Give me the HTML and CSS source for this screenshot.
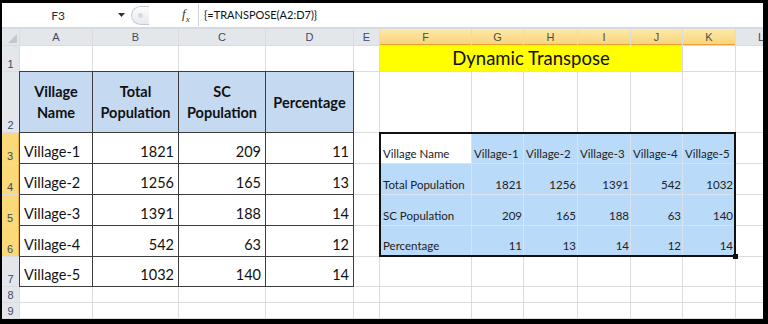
FILE: index.html
```html
<!DOCTYPE html>
<html>
<head>
	<meta charset="utf-8">
	<title>Dynamic Transpose</title>
	<link rel="stylesheet" href="styles.css">
</head>
<body>
<div class="window">
	<div class="formula-bar">
		<div class="name-box">F3</div>
		<div class="name-drop">
			<svg width="7" height="4" viewBox="0 0 7 4"><path d="M0 0H7L3.5 4Z" fill="#333"/></svg>
		</div>
		<div class="grip"><span></span></div>
		<div class="fx"><i>f</i><sub>x</sub></div>
		<div class="formula">{=TRANSPOSE(A2:D7)}</div>
	</div>

	<div class="sheet">
		<div class="title">Dynamic Transpose</div>

		<div class="data">
			<div class="hd">Village<br>Name</div>
			<div class="hd">Total<br>Population</div>
			<div class="hd">SC<br>Population</div>
			<div class="hd">Percentage</div>

			<div class="td">Village-1</div><div class="td num">1821</div><div class="td num">209</div><div class="td num">11</div>
			<div class="td">Village-2</div><div class="td num">1256</div><div class="td num">165</div><div class="td num">13</div>
			<div class="td">Village-3</div><div class="td num">1391</div><div class="td num">188</div><div class="td num">14</div>
			<div class="td">Village-4</div><div class="td num">542</div><div class="td num">63</div><div class="td num">12</div>
			<div class="td">Village-5</div><div class="td num">1032</div><div class="td num">140</div><div class="td num">14</div>
		</div>

		<div class="transpose">
			<div class="t active">Village Name</div>
			<div class="t">Village-1</div><div class="t">Village-2</div><div class="t">Village-3</div><div class="t">Village-4</div><div class="t">Village-5</div>
			<div class="t">Total Population</div>
			<div class="t num">1821</div><div class="t num">1256</div><div class="t num">1391</div><div class="t num">542</div><div class="t num">1032</div>
			<div class="t">SC Population</div>
			<div class="t num">209</div><div class="t num">165</div><div class="t num">188</div><div class="t num">63</div><div class="t num">140</div>
			<div class="t">Percentage</div>
			<div class="t num">11</div><div class="t num">13</div><div class="t num">14</div><div class="t num">12</div><div class="t num">14</div>
		</div>

		<!-- column headers -->
		<div class="corner">
			<svg width="9" height="9" viewBox="0 0 9 9"><path d="M9 0V9H0Z" fill="#c3c8ce"/></svg>
		</div>
		<div class="ch">A</div><div class="ch">B</div><div class="ch">C</div><div class="ch">D</div><div class="ch">E</div>
		<div class="ch sel">F</div><div class="ch sel">G</div><div class="ch sel">H</div><div class="ch sel">I</div><div class="ch sel">J</div><div class="ch sel">K</div>
		<div class="ch last">L</div>

		<!-- row 1 -->
		<div class="rh">1</div>
		<div class="c"></div><div class="c"></div><div class="c"></div><div class="c"></div><div class="c"></div>
		<div class="c"></div><div class="c"></div>

		<!-- row 2 -->
		<div class="rh">2</div>
		<div class="c"></div><div class="c"></div><div class="c"></div><div class="c"></div>
		<div class="c"></div><div class="c"></div><div class="c"></div><div class="c"></div>

		<!-- rows 3-6 -->
		<div class="rh sel">3</div><div class="c"></div><div class="c"></div>
		<div class="rh sel">4</div><div class="c"></div><div class="c"></div>
		<div class="rh sel">5</div><div class="c"></div><div class="c"></div>
		<div class="rh sel">6</div><div class="c"></div><div class="c"></div>

		<!-- row 7 -->
		<div class="rh">7</div>
		<div class="c"></div><div class="c"></div><div class="c"></div><div class="c"></div>
		<div class="c"></div><div class="c"></div><div class="c"></div><div class="c"></div>

		<!-- rows 8-9 -->
		<div class="rh">8</div>
		<div class="c"></div><div class="c"></div><div class="c"></div><div class="c"></div><div class="c"></div><div class="c"></div>
		<div class="c"></div><div class="c"></div><div class="c"></div><div class="c"></div><div class="c"></div><div class="c"></div>
		<div class="rh">9</div>
		<div class="c"></div><div class="c"></div><div class="c"></div><div class="c"></div><div class="c"></div><div class="c"></div>
		<div class="c"></div><div class="c"></div><div class="c"></div><div class="c"></div><div class="c"></div><div class="c"></div>
	</div>
</div>
</body>
</html>
```

FILE: styles.css
```css
*{
	box-sizing: border-box;
}
html, body{
	margin: 0;
	padding: 0;
}
body{
	background: #000;
	width: 768px;
	height: 324px;
	overflow: hidden;
	font-family: Lato, "Liberation Sans", sans-serif;
	cursor: default;
}
.window{
	margin: 3px 5px 0 2px;
	width: 761px;
	height: 316px;
	background: #fff;
	overflow: hidden;
}

/* formula bar */
.formula-bar{
	height: 26px;
	display: flex;
	align-items: center;
	border-bottom: 2px solid #d5dae0;
	font-size: 11px;
	color: #1b2b40;
}
.name-box{
	width: 112px;
	text-align: center;
	font-size: 12px;
}
.name-drop{
	width: 14px;
	display: flex;
	justify-content: center;
}
.grip{
	margin-left: 3px;
	width: 18px;
	height: 19px;
	border: 1px solid #c7ccd3;
	border-right: none;
	border-radius: 10px 0 0 10px;
	background: linear-gradient(#fbfcfd, #e7eaee);
	display: flex;
	align-items: center;
	justify-content: center;
}
.grip span{
	width: 5px;
	height: 5px;
	border-radius: 3px;
	background: #d7dbe0;
}
.fx{
	margin-left: 33px;
	width: 16px;
	font-family: "Liberation Serif", serif;
	font-size: 13px;
	color: #333;
}
.fx sub{
	font-size: 9px;
	font-style: italic;
}
.formula{
	height: 22px;
	border-left: 1px solid #d0d4da;
	padding-left: 5px;
	line-height: 22px;
	color: #111;
}

/* sheet grid */
.sheet{
	display: grid;
	grid-template-columns: 17px 72px 85px 86px 87px 25px 91px 51px 53px 52px 51px 52px 1fr;
	grid-template-rows: 16px 25px 60px 30px 30px 30px 30px 29px 15px 15px;
	gap: 1px;
	padding-bottom: 1px;
	background: #dadcdd;
}
.c{
	background: #fff;
}
.corner{
	background: #e3e7ec;
	display: flex;
	align-items: flex-end;
	justify-content: flex-end;
	padding: 0 2px 2px 0;
}
.ch{
	background: #e3e7ec;
	display: flex;
	align-items: center;
	justify-content: center;
	font-family: "Liberation Sans", sans-serif;
	font-size: 11px;
	color: #3d4b5c;
}
.ch.sel{
	background: linear-gradient(#fde9ab, #f9d57a);
	border-bottom: 1px solid #f0a030;
	color: #4d4d4d;
}
.ch.last{
	justify-content: flex-start;
	padding-left: 22px;
}
.rh{
	background: #e3e7ec;
	display: flex;
	align-items: flex-end;
	justify-content: center;
	padding-bottom: 1px;
	font-family: "Liberation Sans", sans-serif;
	font-size: 11px;
	color: #3d4b5c;
}
.rh.sel{
	background: #fad978;
	border-right: 1px solid #efb046;
}

/* merged title F1:J1 */
.title{
	grid-column: 7 / 12;
	grid-row: 2 / 3;
	background: #ffff00;
	display: flex;
	align-items: flex-end;
	justify-content: center;
	padding-bottom: 2px;
	font-size: 18.5px;
	color: #111;
}

/* source table A2:D7 */
.data{
	grid-column: 2 / 6;
	grid-row: 3 / 9;
	margin: -1px;
	padding: 1px;
	display: grid;
	grid-template-columns: 72px 85px 86px 87px;
	grid-template-rows: 60px 30px 30px 30px 30px 29px;
	gap: 1px;
	background: #3d3d3d;
	font-size: 14.5px;
	color: #111;
}
.data .hd{
	background: #c5d9f1;
	font-weight: bold;
	line-height: 21px;
	text-align: center;
	display: flex;
	align-items: center;
	justify-content: center;
}
.data .td{
	background: #fff;
	display: flex;
	align-items: flex-end;
	padding: 0 4px 3px 4px;
}
.data .num{
	justify-content: flex-end;
}

/* transposed result F3:K6 */
.transpose{
	grid-column: 7 / 13;
	grid-row: 4 / 8;
	margin: -1px;
	position: relative;
	border: 2px solid #111;
	display: grid;
	grid-template-columns: 90px 51px 53px 52px 51px 51px;
	grid-template-rows: 29px 30px 30px 29px;
	gap: 1px;
	background: #d8e3ee;
	font-size: 11.5px;
	color: #222;
}
.transpose .t{
	background: #badafa;
	display: flex;
	align-items: flex-end;
	padding: 0 1px 3px 2px;
	white-space: nowrap;
}
.transpose .num{
	justify-content: flex-end;
}
.transpose .active{
	background: #fff;
}
.transpose::after{
	content: "";
	position: absolute;
	right: -4px;
	bottom: -4px;
	width: 5px;
	height: 5px;
	background: #111;
}
```
